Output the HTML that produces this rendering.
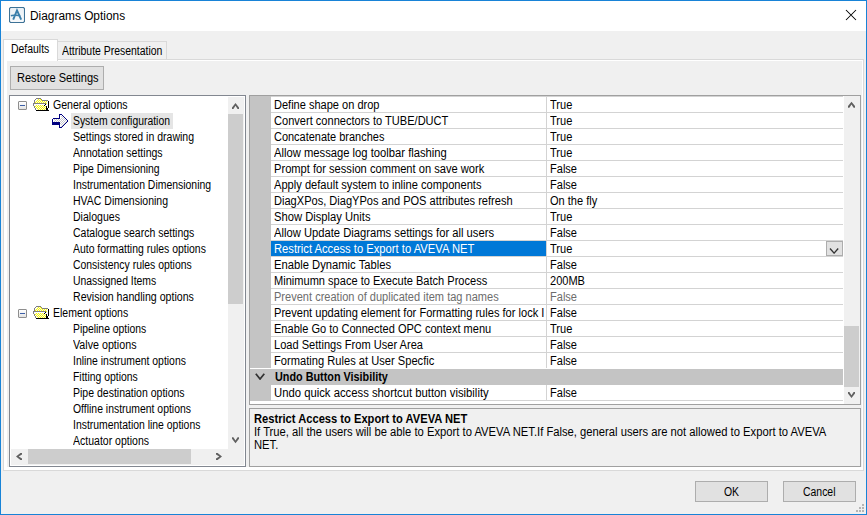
<!DOCTYPE html>
<html><head><meta charset="utf-8">
<style>
*{margin:0;padding:0;box-sizing:border-box}
html,body{width:867px;height:515px;overflow:hidden;background:#f0f0f0}
body{font-family:"Liberation Sans",sans-serif;font-size:12px;color:#000;position:relative}
.a{position:absolute}
.t{position:absolute;white-space:nowrap;transform-origin:0 0}
</style></head><body>
<div class="a" style="left:0px;top:0px;width:867px;height:515px;background:#f0f0f0;border:1px solid #1883d7"></div>
<div class="a" style="left:1px;top:1px;width:865px;height:30px;background:#fff;"></div>
<svg class="a" style="left:9px;top:7px" width="16" height="16" viewBox="0 0 16 16">
<defs><linearGradient id="ig" x1="0" y1="0" x2="0" y2="1"><stop offset="0" stop-color="#e9f0f5"/><stop offset="1" stop-color="#f7f9fb"/></linearGradient></defs>
<path d="M1.5 0.5 H14.5 L15.5 1.5 V14.5 L14.5 15.5 H1.5 L0.5 14.5 V1.5 Z" fill="url(#ig)" stroke="#3d7296" stroke-width="1.1"/>
<path d="M4.2 12.6 L8 3.4 L12.2 12.6" fill="none" stroke="#3a7fab" stroke-width="1.9"/>
<path d="M1.9 8.7 C4.5 7.5 7.5 8.9 11.3 8.4" fill="none" stroke="#3a7fab" stroke-width="1.5"/>
</svg>
<div class="t" style="left:30px;top:8px;line-height:16px;transform:scaleX(0.99);">Diagrams Options</div>
<svg class="a" style="left:845px;top:9px" width="12" height="12" viewBox="0 0 12 12"><path d="M1 1 L11 11 M11 1 L1 11" stroke="#000" stroke-width="1.05"/></svg>
<div class="a" style="left:3px;top:59px;width:861px;height:412px;background:#fff;border:1px solid #d9d9d9"></div>
<div class="a" style="left:7px;top:61px;width:855px;height:406px;background:#f0f0f0;"></div>
<div class="a" style="left:57px;top:41px;width:110px;height:18px;background:#f0f0f0;border:1px solid #d9d9d9;border-bottom:none"></div>
<div class="t" style="left:62px;top:43px;line-height:16px;transform:scaleX(0.87);">Attribute Presentation</div>
<div class="a" style="left:3px;top:39px;width:55px;height:22px;background:#fff;border:1px solid #d9d9d9;border-bottom:none"></div>
<div class="t" style="left:11px;top:41px;line-height:16px;transform:scaleX(0.87);">Defaults</div>
<div class="a" style="left:10px;top:66px;width:94px;height:24px;background:#e1e1e1;border:1px solid #adadad"></div>
<div class="t" style="left:17px;top:70px;line-height:16px;transform:scaleX(0.92);">Restore Settings</div>
<div class="a" style="left:9px;top:95px;width:237px;height:372px;background:#fff;border:1px solid #828790"></div>
<div class="a" style="left:18px;top:101px;width:9px;height:9px;background:linear-gradient(#fff,#e3e3e3);border:1px solid #8e8e8e;border-radius:1px"></div>
<div class="a" style="left:20px;top:105px;width:5px;height:1px;background:#3c5fa8;"></div>
<svg class="a" style="left:33px;top:98px" width="16" height="13" viewBox="0 0 16 13" shape-rendering="crispEdges"><rect x="3" y="0" width="5" height="1" fill="#808080"/><rect x="2" y="1" width="1" height="1" fill="#808080"/><rect x="3" y="1" width="1" height="1" fill="#ffffff"/><rect x="4" y="1" width="1" height="1" fill="#f4f4f4"/><rect x="5" y="1" width="1" height="1" fill="#ffff00"/><rect x="6" y="1" width="1" height="1" fill="#f4f4f4"/><rect x="7" y="1" width="1" height="1" fill="#ffff00"/><rect x="8" y="1" width="1" height="1" fill="#808080"/><rect x="1" y="2" width="1" height="1" fill="#808080"/><rect x="2" y="2" width="1" height="1" fill="#ffffff"/><rect x="3" y="2" width="1" height="1" fill="#f4f4f4"/><rect x="4" y="2" width="1" height="1" fill="#ffff00"/><rect x="5" y="2" width="1" height="1" fill="#f4f4f4"/><rect x="6" y="2" width="1" height="1" fill="#ffff00"/><rect x="7" y="2" width="1" height="1" fill="#f4f4f4"/><rect x="8" y="2" width="1" height="1" fill="#ffff00"/><rect x="9" y="2" width="6" height="1" fill="#808080"/><rect x="1" y="3" width="1" height="1" fill="#808080"/><rect x="2" y="3" width="1" height="1" fill="#f4f4f4"/><rect x="3" y="3" width="1" height="1" fill="#ffff00"/><rect x="4" y="3" width="1" height="1" fill="#f4f4f4"/><rect x="5" y="3" width="1" height="1" fill="#ffff00"/><rect x="6" y="3" width="1" height="1" fill="#f4f4f4"/><rect x="7" y="3" width="1" height="1" fill="#ffff00"/><rect x="8" y="3" width="1" height="1" fill="#f4f4f4"/><rect x="9" y="3" width="1" height="1" fill="#ffff00"/><rect x="10" y="3" width="1" height="1" fill="#f4f4f4"/><rect x="11" y="3" width="1" height="1" fill="#ffff00"/><rect x="12" y="3" width="1" height="1" fill="#f4f4f4"/><rect x="13" y="3" width="1" height="1" fill="#ffff00"/><rect x="14" y="3" width="1" height="1" fill="#ffffff"/><rect x="15" y="3" width="1" height="1" fill="#000000"/><rect x="1" y="4" width="1" height="1" fill="#808080"/><rect x="2" y="4" width="1" height="1" fill="#ffff00"/><rect x="3" y="4" width="1" height="1" fill="#f4f4f4"/><rect x="4" y="4" width="1" height="1" fill="#ffff00"/><rect x="5" y="4" width="1" height="1" fill="#f4f4f4"/><rect x="6" y="4" width="1" height="1" fill="#ffff00"/><rect x="7" y="4" width="1" height="1" fill="#f4f4f4"/><rect x="8" y="4" width="1" height="1" fill="#ffff00"/><rect x="9" y="4" width="1" height="1" fill="#f4f4f4"/><rect x="10" y="4" width="1" height="1" fill="#ffff00"/><rect x="11" y="4" width="1" height="1" fill="#f4f4f4"/><rect x="12" y="4" width="1" height="1" fill="#ffff00"/><rect x="13" y="4" width="1" height="1" fill="#f4f4f4"/><rect x="14" y="4" width="1" height="1" fill="#ffffff"/><rect x="15" y="4" width="1" height="1" fill="#000000"/><rect x="0" y="5" width="13" height="1" fill="#808080"/><rect x="13" y="5" width="1" height="1" fill="#ffff00"/><rect x="14" y="5" width="1" height="1" fill="#ffffff"/><rect x="15" y="5" width="1" height="1" fill="#000000"/><rect x="0" y="6" width="1" height="1" fill="#808080"/><rect x="1" y="6" width="11" height="1" fill="#ffffff"/><rect x="12" y="6" width="1" height="1" fill="#000000"/><rect x="13" y="6" width="1" height="1" fill="#f4f4f4"/><rect x="14" y="6" width="1" height="1" fill="#ffffff"/><rect x="15" y="6" width="1" height="1" fill="#000000"/><rect x="0" y="7" width="1" height="1" fill="#808080"/><rect x="1" y="7" width="1" height="1" fill="#ffffff"/><rect x="2" y="7" width="1" height="1" fill="#f4f4f4"/><rect x="3" y="7" width="1" height="1" fill="#ffff00"/><rect x="4" y="7" width="1" height="1" fill="#f4f4f4"/><rect x="5" y="7" width="1" height="1" fill="#ffff00"/><rect x="6" y="7" width="1" height="1" fill="#f4f4f4"/><rect x="7" y="7" width="1" height="1" fill="#ffff00"/><rect x="8" y="7" width="1" height="1" fill="#f4f4f4"/><rect x="9" y="7" width="1" height="1" fill="#ffff00"/><rect x="10" y="7" width="1" height="1" fill="#f4f4f4"/><rect x="11" y="7" width="1" height="1" fill="#000000"/><rect x="12" y="7" width="3" height="1" fill="#ffffff"/><rect x="15" y="7" width="1" height="1" fill="#000000"/><rect x="1" y="8" width="1" height="1" fill="#808080"/><rect x="2" y="8" width="1" height="1" fill="#ffff00"/><rect x="3" y="8" width="1" height="1" fill="#f4f4f4"/><rect x="4" y="8" width="1" height="1" fill="#ffff00"/><rect x="5" y="8" width="1" height="1" fill="#f4f4f4"/><rect x="6" y="8" width="1" height="1" fill="#ffff00"/><rect x="7" y="8" width="1" height="1" fill="#f4f4f4"/><rect x="8" y="8" width="1" height="1" fill="#ffff00"/><rect x="9" y="8" width="1" height="1" fill="#f4f4f4"/><rect x="10" y="8" width="1" height="1" fill="#ffff00"/><rect x="11" y="8" width="1" height="1" fill="#f4f4f4"/><rect x="12" y="8" width="1" height="1" fill="#ffff00"/><rect x="13" y="8" width="1" height="1" fill="#000000"/><rect x="14" y="8" width="1" height="1" fill="#ffffff"/><rect x="15" y="8" width="1" height="1" fill="#000000"/><rect x="1" y="9" width="1" height="1" fill="#808080"/><rect x="2" y="9" width="1" height="1" fill="#ffffff"/><rect x="3" y="9" width="1" height="1" fill="#ffff00"/><rect x="4" y="9" width="1" height="1" fill="#f4f4f4"/><rect x="5" y="9" width="1" height="1" fill="#ffff00"/><rect x="6" y="9" width="1" height="1" fill="#f4f4f4"/><rect x="7" y="9" width="1" height="1" fill="#ffff00"/><rect x="8" y="9" width="1" height="1" fill="#f4f4f4"/><rect x="9" y="9" width="1" height="1" fill="#ffff00"/><rect x="10" y="9" width="1" height="1" fill="#f4f4f4"/><rect x="11" y="9" width="1" height="1" fill="#ffff00"/><rect x="12" y="9" width="1" height="1" fill="#f4f4f4"/><rect x="13" y="9" width="1" height="1" fill="#000000"/><rect x="14" y="9" width="1" height="1" fill="#ffffff"/><rect x="15" y="9" width="1" height="1" fill="#000000"/><rect x="2" y="10" width="1" height="1" fill="#808080"/><rect x="3" y="10" width="1" height="1" fill="#f4f4f4"/><rect x="4" y="10" width="1" height="1" fill="#ffff00"/><rect x="5" y="10" width="1" height="1" fill="#f4f4f4"/><rect x="6" y="10" width="1" height="1" fill="#ffff00"/><rect x="7" y="10" width="1" height="1" fill="#f4f4f4"/><rect x="8" y="10" width="1" height="1" fill="#ffff00"/><rect x="9" y="10" width="1" height="1" fill="#f4f4f4"/><rect x="10" y="10" width="1" height="1" fill="#ffff00"/><rect x="11" y="10" width="1" height="1" fill="#f4f4f4"/><rect x="12" y="10" width="1" height="1" fill="#ffff00"/><rect x="13" y="10" width="2" height="1" fill="#000000"/><rect x="2" y="11" width="1" height="1" fill="#808080"/><rect x="3" y="11" width="1" height="1" fill="#ffffff"/><rect x="4" y="11" width="1" height="1" fill="#f4f4f4"/><rect x="5" y="11" width="1" height="1" fill="#ffff00"/><rect x="6" y="11" width="1" height="1" fill="#f4f4f4"/><rect x="7" y="11" width="1" height="1" fill="#ffff00"/><rect x="8" y="11" width="1" height="1" fill="#f4f4f4"/><rect x="9" y="11" width="1" height="1" fill="#ffff00"/><rect x="10" y="11" width="1" height="1" fill="#f4f4f4"/><rect x="11" y="11" width="1" height="1" fill="#ffff00"/><rect x="12" y="11" width="1" height="1" fill="#f4f4f4"/><rect x="13" y="11" width="2" height="1" fill="#000000"/><rect x="3" y="12" width="13" height="1" fill="#000000"/></svg>
<div class="t" style="left:53px;top:97px;line-height:16px;transform:scaleX(0.881);">General options</div>
<svg class="a" style="left:52px;top:114px" width="16" height="14" viewBox="0 0 16 14" shape-rendering="crispEdges"><rect x="7" y="0" width="3" height="1" fill="#000080"/><rect x="7" y="1" width="1" height="1" fill="#000080"/><rect x="8" y="1" width="1" height="1" fill="#ffffff"/><rect x="9" y="1" width="1" height="1" fill="#ffffff"/><rect x="10" y="1" width="1" height="1" fill="#000080"/><rect x="7" y="2" width="1" height="1" fill="#000080"/><rect x="8" y="2" width="1" height="1" fill="#ffffff"/><rect x="9" y="2" width="1" height="1" fill="#c8c8d0"/><rect x="10" y="2" width="1" height="1" fill="#ffffff"/><rect x="11" y="2" width="1" height="1" fill="#000080"/><rect x="7" y="3" width="1" height="1" fill="#000080"/><rect x="8" y="3" width="1" height="1" fill="#ffffff"/><rect x="9" y="3" width="1" height="1" fill="#ffffff"/><rect x="10" y="3" width="1" height="1" fill="#c8c8d0"/><rect x="11" y="3" width="1" height="1" fill="#ffffff"/><rect x="12" y="3" width="1" height="1" fill="#000080"/><rect x="1" y="4" width="7" height="1" fill="#000080"/><rect x="8" y="4" width="1" height="1" fill="#ffffff"/><rect x="9" y="4" width="1" height="1" fill="#c8c8d0"/><rect x="10" y="4" width="1" height="1" fill="#ffffff"/><rect x="11" y="4" width="1" height="1" fill="#c8c8d0"/><rect x="12" y="4" width="1" height="1" fill="#ffffff"/><rect x="13" y="4" width="1" height="1" fill="#000080"/><rect x="0" y="5" width="1" height="1" fill="#000080"/><rect x="1" y="5" width="1" height="1" fill="#ffffff"/><rect x="2" y="5" width="1" height="1" fill="#c8c8d0"/><rect x="3" y="5" width="1" height="1" fill="#ffffff"/><rect x="4" y="5" width="1" height="1" fill="#c8c8d0"/><rect x="5" y="5" width="1" height="1" fill="#ffffff"/><rect x="6" y="5" width="1" height="1" fill="#c8c8d0"/><rect x="7" y="5" width="1" height="1" fill="#ffffff"/><rect x="8" y="5" width="1" height="1" fill="#c8c8d0"/><rect x="9" y="5" width="1" height="1" fill="#ffffff"/><rect x="10" y="5" width="1" height="1" fill="#c8c8d0"/><rect x="11" y="5" width="1" height="1" fill="#ffffff"/><rect x="12" y="5" width="1" height="1" fill="#c8c8d0"/><rect x="13" y="5" width="1" height="1" fill="#ffffff"/><rect x="14" y="5" width="1" height="1" fill="#000080"/><rect x="0" y="6" width="1" height="1" fill="#000080"/><rect x="1" y="6" width="1" height="1" fill="#ffffff"/><rect x="2" y="6" width="1" height="1" fill="#ffffff"/><rect x="3" y="6" width="1" height="1" fill="#c8c8d0"/><rect x="4" y="6" width="1" height="1" fill="#ffffff"/><rect x="5" y="6" width="1" height="1" fill="#c8c8d0"/><rect x="6" y="6" width="1" height="1" fill="#ffffff"/><rect x="7" y="6" width="1" height="1" fill="#c8c8d0"/><rect x="8" y="6" width="1" height="1" fill="#ffffff"/><rect x="9" y="6" width="1" height="1" fill="#c8c8d0"/><rect x="10" y="6" width="1" height="1" fill="#ffffff"/><rect x="11" y="6" width="1" height="1" fill="#c8c8d0"/><rect x="12" y="6" width="1" height="1" fill="#ffffff"/><rect x="13" y="6" width="1" height="1" fill="#c8c8d0"/><rect x="14" y="6" width="1" height="1" fill="#ffffff"/><rect x="15" y="6" width="1" height="1" fill="#000080"/><rect x="0" y="7" width="1" height="1" fill="#000080"/><rect x="1" y="7" width="1" height="1" fill="#ffffff"/><rect x="2" y="7" width="1" height="1" fill="#c8c8d0"/><rect x="3" y="7" width="1" height="1" fill="#ffffff"/><rect x="4" y="7" width="1" height="1" fill="#c8c8d0"/><rect x="5" y="7" width="1" height="1" fill="#ffffff"/><rect x="6" y="7" width="1" height="1" fill="#c8c8d0"/><rect x="7" y="7" width="1" height="1" fill="#ffffff"/><rect x="8" y="7" width="1" height="1" fill="#c8c8d0"/><rect x="9" y="7" width="1" height="1" fill="#ffffff"/><rect x="10" y="7" width="1" height="1" fill="#c8c8d0"/><rect x="11" y="7" width="1" height="1" fill="#ffffff"/><rect x="12" y="7" width="1" height="1" fill="#c8c8d0"/><rect x="13" y="7" width="1" height="1" fill="#ffffff"/><rect x="14" y="7" width="1" height="1" fill="#c8c8d0"/><rect x="15" y="7" width="1" height="1" fill="#000080"/><rect x="0" y="8" width="8" height="1" fill="#000080"/><rect x="8" y="8" width="1" height="1" fill="#ffffff"/><rect x="9" y="8" width="1" height="1" fill="#c8c8d0"/><rect x="10" y="8" width="1" height="1" fill="#ffffff"/><rect x="11" y="8" width="1" height="1" fill="#c8c8d0"/><rect x="12" y="8" width="1" height="1" fill="#ffffff"/><rect x="13" y="8" width="1" height="1" fill="#c8c8d0"/><rect x="14" y="8" width="1" height="1" fill="#000080"/><rect x="0" y="9" width="8" height="1" fill="#000080"/><rect x="8" y="9" width="1" height="1" fill="#c8c8d0"/><rect x="9" y="9" width="1" height="1" fill="#ffffff"/><rect x="10" y="9" width="1" height="1" fill="#c8c8d0"/><rect x="11" y="9" width="1" height="1" fill="#ffffff"/><rect x="12" y="9" width="1" height="1" fill="#c8c8d0"/><rect x="13" y="9" width="1" height="1" fill="#000080"/><rect x="0" y="10" width="8" height="1" fill="#000080"/><rect x="8" y="10" width="1" height="1" fill="#ffffff"/><rect x="9" y="10" width="1" height="1" fill="#c8c8d0"/><rect x="10" y="10" width="1" height="1" fill="#ffffff"/><rect x="11" y="10" width="1" height="1" fill="#c8c8d0"/><rect x="12" y="10" width="1" height="1" fill="#000080"/><rect x="7" y="11" width="1" height="1" fill="#000080"/><rect x="8" y="11" width="1" height="1" fill="#ffffff"/><rect x="9" y="11" width="1" height="1" fill="#ffffff"/><rect x="10" y="11" width="1" height="1" fill="#c8c8d0"/><rect x="11" y="11" width="1" height="1" fill="#000080"/><rect x="7" y="12" width="1" height="1" fill="#000080"/><rect x="8" y="12" width="1" height="1" fill="#ffffff"/><rect x="9" y="12" width="1" height="1" fill="#c8c8d0"/><rect x="10" y="12" width="1" height="1" fill="#000080"/><rect x="7" y="13" width="3" height="1" fill="#000080"/></svg>
<div class="a" style="left:71px;top:113px;width:102px;height:16px;background:#e5e5e5;"></div>
<div class="t" style="left:73px;top:113px;line-height:16px;transform:scaleX(0.8651);">System configuration</div>
<div class="t" style="left:73px;top:129px;line-height:16px;transform:scaleX(0.8765);">Settings stored in drawing</div>
<div class="t" style="left:73px;top:145px;line-height:16px;transform:scaleX(0.878);">Annotation settings</div>
<div class="t" style="left:73px;top:161px;line-height:16px;transform:scaleX(0.8659);">Pipe Dimensioning</div>
<div class="t" style="left:73px;top:177px;line-height:16px;transform:scaleX(0.8699);">Instrumentation Dimensioning</div>
<div class="t" style="left:73px;top:193px;line-height:16px;transform:scaleX(0.8759);">HVAC Dimensioning</div>
<div class="t" style="left:73px;top:209px;line-height:16px;transform:scaleX(0.8788);">Dialogues</div>
<div class="t" style="left:73px;top:225px;line-height:16px;transform:scaleX(0.8743);">Catalogue search settings</div>
<div class="t" style="left:73px;top:241px;line-height:16px;transform:scaleX(0.8697);">Auto formatting rules options</div>
<div class="t" style="left:73px;top:257px;line-height:16px;transform:scaleX(0.8684);">Consistency rules options</div>
<div class="t" style="left:73px;top:273px;line-height:16px;transform:scaleX(0.8666);">Unassigned Items</div>
<div class="t" style="left:73px;top:289px;line-height:16px;transform:scaleX(0.8839);">Revision handling options</div>
<div class="a" style="left:18px;top:309px;width:9px;height:9px;background:linear-gradient(#fff,#e3e3e3);border:1px solid #8e8e8e;border-radius:1px"></div>
<div class="a" style="left:20px;top:313px;width:5px;height:1px;background:#3c5fa8;"></div>
<svg class="a" style="left:33px;top:306px" width="16" height="13" viewBox="0 0 16 13" shape-rendering="crispEdges"><rect x="3" y="0" width="5" height="1" fill="#808080"/><rect x="2" y="1" width="1" height="1" fill="#808080"/><rect x="3" y="1" width="1" height="1" fill="#ffffff"/><rect x="4" y="1" width="1" height="1" fill="#f4f4f4"/><rect x="5" y="1" width="1" height="1" fill="#ffff00"/><rect x="6" y="1" width="1" height="1" fill="#f4f4f4"/><rect x="7" y="1" width="1" height="1" fill="#ffff00"/><rect x="8" y="1" width="1" height="1" fill="#808080"/><rect x="1" y="2" width="1" height="1" fill="#808080"/><rect x="2" y="2" width="1" height="1" fill="#ffffff"/><rect x="3" y="2" width="1" height="1" fill="#f4f4f4"/><rect x="4" y="2" width="1" height="1" fill="#ffff00"/><rect x="5" y="2" width="1" height="1" fill="#f4f4f4"/><rect x="6" y="2" width="1" height="1" fill="#ffff00"/><rect x="7" y="2" width="1" height="1" fill="#f4f4f4"/><rect x="8" y="2" width="1" height="1" fill="#ffff00"/><rect x="9" y="2" width="6" height="1" fill="#808080"/><rect x="1" y="3" width="1" height="1" fill="#808080"/><rect x="2" y="3" width="1" height="1" fill="#f4f4f4"/><rect x="3" y="3" width="1" height="1" fill="#ffff00"/><rect x="4" y="3" width="1" height="1" fill="#f4f4f4"/><rect x="5" y="3" width="1" height="1" fill="#ffff00"/><rect x="6" y="3" width="1" height="1" fill="#f4f4f4"/><rect x="7" y="3" width="1" height="1" fill="#ffff00"/><rect x="8" y="3" width="1" height="1" fill="#f4f4f4"/><rect x="9" y="3" width="1" height="1" fill="#ffff00"/><rect x="10" y="3" width="1" height="1" fill="#f4f4f4"/><rect x="11" y="3" width="1" height="1" fill="#ffff00"/><rect x="12" y="3" width="1" height="1" fill="#f4f4f4"/><rect x="13" y="3" width="1" height="1" fill="#ffff00"/><rect x="14" y="3" width="1" height="1" fill="#ffffff"/><rect x="15" y="3" width="1" height="1" fill="#000000"/><rect x="1" y="4" width="1" height="1" fill="#808080"/><rect x="2" y="4" width="1" height="1" fill="#ffff00"/><rect x="3" y="4" width="1" height="1" fill="#f4f4f4"/><rect x="4" y="4" width="1" height="1" fill="#ffff00"/><rect x="5" y="4" width="1" height="1" fill="#f4f4f4"/><rect x="6" y="4" width="1" height="1" fill="#ffff00"/><rect x="7" y="4" width="1" height="1" fill="#f4f4f4"/><rect x="8" y="4" width="1" height="1" fill="#ffff00"/><rect x="9" y="4" width="1" height="1" fill="#f4f4f4"/><rect x="10" y="4" width="1" height="1" fill="#ffff00"/><rect x="11" y="4" width="1" height="1" fill="#f4f4f4"/><rect x="12" y="4" width="1" height="1" fill="#ffff00"/><rect x="13" y="4" width="1" height="1" fill="#f4f4f4"/><rect x="14" y="4" width="1" height="1" fill="#ffffff"/><rect x="15" y="4" width="1" height="1" fill="#000000"/><rect x="0" y="5" width="13" height="1" fill="#808080"/><rect x="13" y="5" width="1" height="1" fill="#ffff00"/><rect x="14" y="5" width="1" height="1" fill="#ffffff"/><rect x="15" y="5" width="1" height="1" fill="#000000"/><rect x="0" y="6" width="1" height="1" fill="#808080"/><rect x="1" y="6" width="11" height="1" fill="#ffffff"/><rect x="12" y="6" width="1" height="1" fill="#000000"/><rect x="13" y="6" width="1" height="1" fill="#f4f4f4"/><rect x="14" y="6" width="1" height="1" fill="#ffffff"/><rect x="15" y="6" width="1" height="1" fill="#000000"/><rect x="0" y="7" width="1" height="1" fill="#808080"/><rect x="1" y="7" width="1" height="1" fill="#ffffff"/><rect x="2" y="7" width="1" height="1" fill="#f4f4f4"/><rect x="3" y="7" width="1" height="1" fill="#ffff00"/><rect x="4" y="7" width="1" height="1" fill="#f4f4f4"/><rect x="5" y="7" width="1" height="1" fill="#ffff00"/><rect x="6" y="7" width="1" height="1" fill="#f4f4f4"/><rect x="7" y="7" width="1" height="1" fill="#ffff00"/><rect x="8" y="7" width="1" height="1" fill="#f4f4f4"/><rect x="9" y="7" width="1" height="1" fill="#ffff00"/><rect x="10" y="7" width="1" height="1" fill="#f4f4f4"/><rect x="11" y="7" width="1" height="1" fill="#000000"/><rect x="12" y="7" width="3" height="1" fill="#ffffff"/><rect x="15" y="7" width="1" height="1" fill="#000000"/><rect x="1" y="8" width="1" height="1" fill="#808080"/><rect x="2" y="8" width="1" height="1" fill="#ffff00"/><rect x="3" y="8" width="1" height="1" fill="#f4f4f4"/><rect x="4" y="8" width="1" height="1" fill="#ffff00"/><rect x="5" y="8" width="1" height="1" fill="#f4f4f4"/><rect x="6" y="8" width="1" height="1" fill="#ffff00"/><rect x="7" y="8" width="1" height="1" fill="#f4f4f4"/><rect x="8" y="8" width="1" height="1" fill="#ffff00"/><rect x="9" y="8" width="1" height="1" fill="#f4f4f4"/><rect x="10" y="8" width="1" height="1" fill="#ffff00"/><rect x="11" y="8" width="1" height="1" fill="#f4f4f4"/><rect x="12" y="8" width="1" height="1" fill="#ffff00"/><rect x="13" y="8" width="1" height="1" fill="#000000"/><rect x="14" y="8" width="1" height="1" fill="#ffffff"/><rect x="15" y="8" width="1" height="1" fill="#000000"/><rect x="1" y="9" width="1" height="1" fill="#808080"/><rect x="2" y="9" width="1" height="1" fill="#ffffff"/><rect x="3" y="9" width="1" height="1" fill="#ffff00"/><rect x="4" y="9" width="1" height="1" fill="#f4f4f4"/><rect x="5" y="9" width="1" height="1" fill="#ffff00"/><rect x="6" y="9" width="1" height="1" fill="#f4f4f4"/><rect x="7" y="9" width="1" height="1" fill="#ffff00"/><rect x="8" y="9" width="1" height="1" fill="#f4f4f4"/><rect x="9" y="9" width="1" height="1" fill="#ffff00"/><rect x="10" y="9" width="1" height="1" fill="#f4f4f4"/><rect x="11" y="9" width="1" height="1" fill="#ffff00"/><rect x="12" y="9" width="1" height="1" fill="#f4f4f4"/><rect x="13" y="9" width="1" height="1" fill="#000000"/><rect x="14" y="9" width="1" height="1" fill="#ffffff"/><rect x="15" y="9" width="1" height="1" fill="#000000"/><rect x="2" y="10" width="1" height="1" fill="#808080"/><rect x="3" y="10" width="1" height="1" fill="#f4f4f4"/><rect x="4" y="10" width="1" height="1" fill="#ffff00"/><rect x="5" y="10" width="1" height="1" fill="#f4f4f4"/><rect x="6" y="10" width="1" height="1" fill="#ffff00"/><rect x="7" y="10" width="1" height="1" fill="#f4f4f4"/><rect x="8" y="10" width="1" height="1" fill="#ffff00"/><rect x="9" y="10" width="1" height="1" fill="#f4f4f4"/><rect x="10" y="10" width="1" height="1" fill="#ffff00"/><rect x="11" y="10" width="1" height="1" fill="#f4f4f4"/><rect x="12" y="10" width="1" height="1" fill="#ffff00"/><rect x="13" y="10" width="2" height="1" fill="#000000"/><rect x="2" y="11" width="1" height="1" fill="#808080"/><rect x="3" y="11" width="1" height="1" fill="#ffffff"/><rect x="4" y="11" width="1" height="1" fill="#f4f4f4"/><rect x="5" y="11" width="1" height="1" fill="#ffff00"/><rect x="6" y="11" width="1" height="1" fill="#f4f4f4"/><rect x="7" y="11" width="1" height="1" fill="#ffff00"/><rect x="8" y="11" width="1" height="1" fill="#f4f4f4"/><rect x="9" y="11" width="1" height="1" fill="#ffff00"/><rect x="10" y="11" width="1" height="1" fill="#f4f4f4"/><rect x="11" y="11" width="1" height="1" fill="#ffff00"/><rect x="12" y="11" width="1" height="1" fill="#f4f4f4"/><rect x="13" y="11" width="2" height="1" fill="#000000"/><rect x="3" y="12" width="13" height="1" fill="#000000"/></svg>
<div class="t" style="left:53px;top:305px;line-height:16px;transform:scaleX(0.8738);">Element options</div>
<div class="t" style="left:73px;top:321px;line-height:16px;transform:scaleX(0.8643);">Pipeline options</div>
<div class="t" style="left:73px;top:337px;line-height:16px;transform:scaleX(0.8921);">Valve options</div>
<div class="t" style="left:73px;top:353px;line-height:16px;transform:scaleX(0.868);">Inline instrument options</div>
<div class="t" style="left:73px;top:369px;line-height:16px;transform:scaleX(0.8669);">Fitting options</div>
<div class="t" style="left:73px;top:385px;line-height:16px;transform:scaleX(0.8758);">Pipe destination options</div>
<div class="t" style="left:73px;top:401px;line-height:16px;transform:scaleX(0.8683);">Offline instrument options</div>
<div class="t" style="left:73px;top:417px;line-height:16px;transform:scaleX(0.8681);">Instrumentation line options</div>
<div class="t" style="left:73px;top:433px;line-height:16px;transform:scaleX(0.8762);">Actuator options</div>
<div class="a" style="left:228px;top:97px;width:16px;height:352px;background:#f0f0f0;"></div>
<div class="a" style="left:228px;top:114px;width:15px;height:190px;background:#cdcdcd;"></div>
<svg class="a" style="left:232px;top:103px" width="9" height="8"><polygon points="3.50,0.00 7.00,4.40 7.00,6.00 5.60,6.00 3.50,2.70 1.40,6.00 0.00,6.00 0.00,4.40" fill="#606060"/></svg>
<svg class="a" style="left:232px;top:437px" width="9" height="8"><polygon points="3.50,6.20 7.00,1.80 7.00,0.20 5.60,0.20 3.50,3.50 1.40,0.20 0.00,0.20 0.00,1.80" fill="#606060"/></svg>
<div class="a" style="left:11px;top:449px;width:233px;height:16px;background:#f0f0f0;"></div>
<div class="a" style="left:28px;top:449px;width:163px;height:15px;background:#cdcdcd;"></div>
<svg class="a" style="left:16px;top:453px" width="8" height="9"><polygon points="0.00,3.50 4.40,7.00 6.00,7.00 6.00,5.60 2.70,3.50 6.00,1.40 6.00,0.00 4.40,0.00" fill="#606060"/></svg>
<svg class="a" style="left:216px;top:453px" width="8" height="9"><polygon points="6.00,3.50 1.60,7.00 0.00,7.00 0.00,5.60 3.30,3.50 0.00,1.40 0.00,0.00 1.60,0.00" fill="#606060"/></svg>
<div class="a" style="left:249px;top:95px;width:612px;height:310px;background:#fff;border:1px solid #a0a0a0"></div>
<div class="a" style="left:250px;top:96px;width:21px;height:305px;background:#c4c4c4;"></div>
<div class="a" style="left:271px;top:96px;width:572px;height:1px;background:#d3d3d3;"></div>
<div class="a" style="left:546px;top:97px;width:1px;height:15px;background:#d3d3d3;"></div>
<div class="a" style="left:271px;top:97px;width:275px;height:15px;overflow:hidden"><div class="t" style="left:3px;top:0px;line-height:16px;transform:scaleX(0.9191);color:#000">Define shape on drop</div></div>
<div class="t" style="left:550px;top:97px;line-height:16px;transform:scaleX(0.92);color:#000">True</div>
<div class="a" style="left:271px;top:112px;width:572px;height:1px;background:#d3d3d3;"></div>
<div class="a" style="left:546px;top:113px;width:1px;height:15px;background:#d3d3d3;"></div>
<div class="a" style="left:271px;top:113px;width:275px;height:15px;overflow:hidden"><div class="t" style="left:3px;top:0px;line-height:16px;transform:scaleX(0.9216);color:#000">Convert connectors to TUBE/DUCT</div></div>
<div class="t" style="left:550px;top:113px;line-height:16px;transform:scaleX(0.92);color:#000">True</div>
<div class="a" style="left:271px;top:128px;width:572px;height:1px;background:#d3d3d3;"></div>
<div class="a" style="left:546px;top:129px;width:1px;height:15px;background:#d3d3d3;"></div>
<div class="a" style="left:271px;top:129px;width:275px;height:15px;overflow:hidden"><div class="t" style="left:3px;top:0px;line-height:16px;transform:scaleX(0.9142);color:#000">Concatenate branches</div></div>
<div class="t" style="left:550px;top:129px;line-height:16px;transform:scaleX(0.92);color:#000">True</div>
<div class="a" style="left:271px;top:144px;width:572px;height:1px;background:#d3d3d3;"></div>
<div class="a" style="left:546px;top:145px;width:1px;height:15px;background:#d3d3d3;"></div>
<div class="a" style="left:271px;top:145px;width:275px;height:15px;overflow:hidden"><div class="t" style="left:3px;top:0px;line-height:16px;transform:scaleX(0.9353);color:#000">Allow message log toolbar flashing</div></div>
<div class="t" style="left:550px;top:145px;line-height:16px;transform:scaleX(0.92);color:#000">True</div>
<div class="a" style="left:271px;top:160px;width:572px;height:1px;background:#d3d3d3;"></div>
<div class="a" style="left:546px;top:161px;width:1px;height:15px;background:#d3d3d3;"></div>
<div class="a" style="left:271px;top:161px;width:275px;height:15px;overflow:hidden"><div class="t" style="left:3px;top:0px;line-height:16px;transform:scaleX(0.9275);color:#000">Prompt for session comment on save work</div></div>
<div class="t" style="left:550px;top:161px;line-height:16px;transform:scaleX(0.92);color:#000">False</div>
<div class="a" style="left:271px;top:176px;width:572px;height:1px;background:#d3d3d3;"></div>
<div class="a" style="left:546px;top:177px;width:1px;height:15px;background:#d3d3d3;"></div>
<div class="a" style="left:271px;top:177px;width:275px;height:15px;overflow:hidden"><div class="t" style="left:3px;top:0px;line-height:16px;transform:scaleX(0.9258);color:#000">Apply default system to inline components</div></div>
<div class="t" style="left:550px;top:177px;line-height:16px;transform:scaleX(0.92);color:#000">False</div>
<div class="a" style="left:271px;top:192px;width:572px;height:1px;background:#d3d3d3;"></div>
<div class="a" style="left:546px;top:193px;width:1px;height:15px;background:#d3d3d3;"></div>
<div class="a" style="left:271px;top:193px;width:275px;height:15px;overflow:hidden"><div class="t" style="left:3px;top:0px;line-height:16px;transform:scaleX(0.9219);color:#000">DiagXPos, DiagYPos and POS attributes refresh</div></div>
<div class="t" style="left:550px;top:193px;line-height:16px;transform:scaleX(0.92);color:#000">On the fly</div>
<div class="a" style="left:271px;top:208px;width:572px;height:1px;background:#d3d3d3;"></div>
<div class="a" style="left:546px;top:209px;width:1px;height:15px;background:#d3d3d3;"></div>
<div class="a" style="left:271px;top:209px;width:275px;height:15px;overflow:hidden"><div class="t" style="left:3px;top:0px;line-height:16px;transform:scaleX(0.9336);color:#000">Show Display Units</div></div>
<div class="t" style="left:550px;top:209px;line-height:16px;transform:scaleX(0.92);color:#000">True</div>
<div class="a" style="left:271px;top:224px;width:572px;height:1px;background:#d3d3d3;"></div>
<div class="a" style="left:546px;top:225px;width:1px;height:15px;background:#d3d3d3;"></div>
<div class="a" style="left:271px;top:225px;width:275px;height:15px;overflow:hidden"><div class="t" style="left:3px;top:0px;line-height:16px;transform:scaleX(0.9345);color:#000">Allow Update Diagrams settings for all users</div></div>
<div class="t" style="left:550px;top:225px;line-height:16px;transform:scaleX(0.92);color:#000">False</div>
<div class="a" style="left:271px;top:240px;width:572px;height:1px;background:#d3d3d3;"></div>
<div class="a" style="left:546px;top:241px;width:1px;height:15px;background:#d3d3d3;"></div>
<div class="a" style="left:271px;top:241px;width:275px;height:15px;background:#0078d7;"></div>
<div class="a" style="left:271px;top:241px;width:275px;height:15px;overflow:hidden"><div class="t" style="left:3px;top:0px;line-height:16px;transform:scaleX(0.935);color:#fff">Restrict Access to Export to AVEVA NET</div></div>
<div class="t" style="left:550px;top:241px;line-height:16px;transform:scaleX(0.92);color:#000">True</div>
<div class="a" style="left:826px;top:241px;width:17px;height:15px;background:#e1e1e1;border:1px solid #adadad"></div>
<svg class="a" style="left:829px;top:247px" width="11" height="7"><path d="M1.00 1.50 L5.10 6.10 L9.20 1.50" fill="none" stroke="#333" stroke-width="1.35"/></svg>
<div class="a" style="left:271px;top:256px;width:572px;height:1px;background:#d3d3d3;"></div>
<div class="a" style="left:546px;top:257px;width:1px;height:15px;background:#d3d3d3;"></div>
<div class="a" style="left:271px;top:257px;width:275px;height:15px;overflow:hidden"><div class="t" style="left:3px;top:0px;line-height:16px;transform:scaleX(0.9353);color:#000">Enable Dynamic Tables</div></div>
<div class="t" style="left:550px;top:257px;line-height:16px;transform:scaleX(0.92);color:#000">False</div>
<div class="a" style="left:271px;top:272px;width:572px;height:1px;background:#d3d3d3;"></div>
<div class="a" style="left:546px;top:273px;width:1px;height:15px;background:#d3d3d3;"></div>
<div class="a" style="left:271px;top:273px;width:275px;height:15px;overflow:hidden"><div class="t" style="left:3px;top:0px;line-height:16px;transform:scaleX(0.9213);color:#000">Minimumn space to Execute Batch Process</div></div>
<div class="t" style="left:550px;top:273px;line-height:16px;transform:scaleX(0.92);color:#000">200MB</div>
<div class="a" style="left:271px;top:288px;width:572px;height:1px;background:#d3d3d3;"></div>
<div class="a" style="left:546px;top:289px;width:1px;height:15px;background:#d3d3d3;"></div>
<div class="a" style="left:271px;top:289px;width:275px;height:15px;overflow:hidden"><div class="t" style="left:3px;top:0px;line-height:16px;transform:scaleX(0.9204);color:#6d6d6d">Prevent creation of duplicated item tag names</div></div>
<div class="t" style="left:550px;top:289px;line-height:16px;transform:scaleX(0.92);color:#6d6d6d">False</div>
<div class="a" style="left:271px;top:304px;width:572px;height:1px;background:#d3d3d3;"></div>
<div class="a" style="left:546px;top:305px;width:1px;height:15px;background:#d3d3d3;"></div>
<div class="a" style="left:271px;top:305px;width:275px;height:15px;overflow:hidden"><div class="t" style="left:3px;top:0px;line-height:16px;transform:scaleX(0.9235);color:#000">Prevent updating element for Formatting rules for lock I</div></div>
<div class="t" style="left:550px;top:305px;line-height:16px;transform:scaleX(0.92);color:#000">False</div>
<div class="a" style="left:271px;top:320px;width:572px;height:1px;background:#d3d3d3;"></div>
<div class="a" style="left:546px;top:321px;width:1px;height:15px;background:#d3d3d3;"></div>
<div class="a" style="left:271px;top:321px;width:275px;height:15px;overflow:hidden"><div class="t" style="left:3px;top:0px;line-height:16px;transform:scaleX(0.9196);color:#000">Enable Go to Connected OPC context menu</div></div>
<div class="t" style="left:550px;top:321px;line-height:16px;transform:scaleX(0.92);color:#000">True</div>
<div class="a" style="left:271px;top:336px;width:572px;height:1px;background:#d3d3d3;"></div>
<div class="a" style="left:546px;top:337px;width:1px;height:15px;background:#d3d3d3;"></div>
<div class="a" style="left:271px;top:337px;width:275px;height:15px;overflow:hidden"><div class="t" style="left:3px;top:0px;line-height:16px;transform:scaleX(0.9231);color:#000">Load Settings From User Area</div></div>
<div class="t" style="left:550px;top:337px;line-height:16px;transform:scaleX(0.92);color:#000">False</div>
<div class="a" style="left:271px;top:352px;width:572px;height:1px;background:#d3d3d3;"></div>
<div class="a" style="left:546px;top:353px;width:1px;height:15px;background:#d3d3d3;"></div>
<div class="a" style="left:271px;top:353px;width:275px;height:15px;overflow:hidden"><div class="t" style="left:3px;top:0px;line-height:16px;transform:scaleX(0.9281);color:#000">Formating Rules at User Specfic</div></div>
<div class="t" style="left:550px;top:353px;line-height:16px;transform:scaleX(0.92);color:#000">False</div>
<div class="a" style="left:250px;top:368px;width:593px;height:1px;background:#fff;"></div>
<div class="a" style="left:250px;top:369px;width:593px;height:16px;background:#c4c4c4;"></div>
<svg class="a" style="left:254px;top:372px" width="11" height="8"><path d="M1.80 1.80 L6.05 7.00 L10.30 1.80" fill="none" stroke="#333" stroke-width="1.75"/></svg>
<div class="t" style="left:275px;top:369px;line-height:16px;transform:scaleX(0.9015);font-weight:bold">Undo Button Visibility</div>
<div class="a" style="left:546px;top:385px;width:1px;height:15px;background:#d3d3d3;"></div>
<div class="a" style="left:271px;top:385px;width:275px;height:15px;overflow:hidden"><div class="t" style="left:3px;top:0px;line-height:16px;transform:scaleX(0.9411);color:#000">Undo quick access shortcut button visibility</div></div>
<div class="t" style="left:550px;top:385px;line-height:16px;transform:scaleX(0.92);color:#000">False</div>
<div class="a" style="left:271px;top:400px;width:572px;height:1px;background:#d3d3d3;"></div>
<div class="a" style="left:844px;top:96px;width:16px;height:308px;background:#f0f0f0;"></div>
<div class="a" style="left:844px;top:326px;width:15px;height:61px;background:#cdcdcd;"></div>
<svg class="a" style="left:848px;top:101px" width="9" height="8"><polygon points="3.50,0.70 7.00,5.10 7.00,6.70 5.60,6.70 3.50,3.40 1.40,6.70 0.00,6.70 0.00,5.10" fill="#606060"/></svg>
<svg class="a" style="left:848px;top:392px" width="9" height="8"><polygon points="3.50,6.00 7.00,1.60 7.00,0.00 5.60,0.00 3.50,3.30 1.40,0.00 0.00,0.00 0.00,1.60" fill="#606060"/></svg>
<div class="a" style="left:249px;top:408px;width:612px;height:59px;background:#f0f0f0;border:1px solid #a0a0a0"></div>
<div class="t" style="left:254px;top:413px;line-height:13px;transform:scaleX(0.929);font-weight:bold">Restrict Access to Export to AVEVA NET</div>
<div class="t" style="left:254px;top:426px;line-height:13px;transform:scaleX(0.936);">If True, all the users will be able to Export to AVEVA NET.If False, general users are not allowed to Export to AVEVA</div>
<div class="t" style="left:254px;top:439px;line-height:13px;transform:scaleX(0.936);">NET.</div>
<div class="a" style="left:695px;top:481px;width:73px;height:21px;background:#e1e1e1;border:1px solid #adadad"></div>
<div class="t" style="left:724px;top:484px;line-height:16px;transform:scaleX(0.87);">OK</div>
<div class="a" style="left:783px;top:481px;width:73px;height:21px;background:#e1e1e1;border:1px solid #adadad"></div>
<div class="t" style="left:803px;top:484px;line-height:16px;transform:scaleX(0.87);">Cancel</div>
<div class="a" style="left:862px;top:504px;width:2px;height:2px;background:#b4b4b4;"></div>
<div class="a" style="left:859px;top:507px;width:2px;height:2px;background:#b4b4b4;"></div>
<div class="a" style="left:862px;top:507px;width:2px;height:2px;background:#b4b4b4;"></div>
<div class="a" style="left:856px;top:510px;width:2px;height:2px;background:#b4b4b4;"></div>
<div class="a" style="left:859px;top:510px;width:2px;height:2px;background:#b4b4b4;"></div>
<div class="a" style="left:862px;top:510px;width:2px;height:2px;background:#b4b4b4;"></div>
</body></html>
